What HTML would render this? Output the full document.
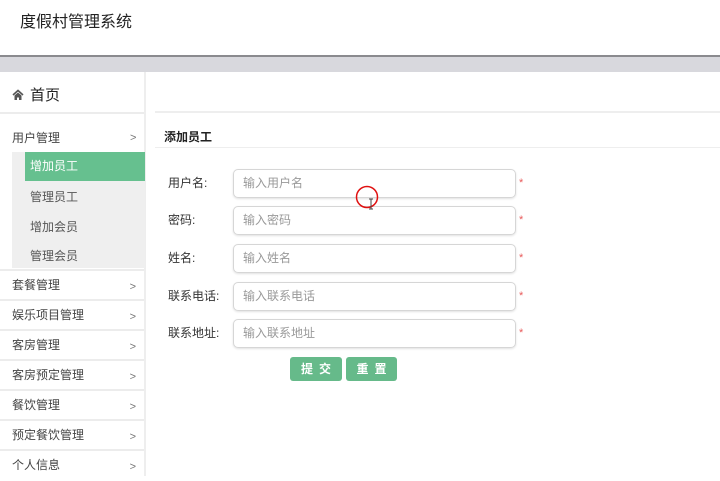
<!DOCTYPE html>
<html><head><meta charset="utf-8"><style>
*{margin:0;padding:0;box-sizing:border-box}
body{width:720px;height:476px;overflow:hidden;background:#fff;font-family:"Liberation Sans","Noto Sans CJK SC",sans-serif;position:relative;color:#333}
.a{position:absolute}
.hdr{left:0;top:0;width:720px;height:56px;background:#fff}
.title{left:20px;top:8px;font-size:16px;color:#222}
.line{left:0;top:55px;width:720px;height:2px;background:#8a8a8e}
.band{left:0;top:57px;width:720px;height:15px;background:#d8d8dd}
.sb{left:0;top:72px;width:146px;height:404px;border-right:2px solid #eee}
.home{left:12px;top:84px;font-size:15px;color:#222}
.mi{left:0;width:144px;height:30px;border-top:2px solid #ececec;font-size:12px;color:#444;padding-left:12px;line-height:28px}
.mi span{position:absolute;right:8px;top:2px;color:#777;font-size:11px}
.sub{left:12px;top:152px;width:133px;height:116px;background:#efefef}
.si{left:30px;font-size:12px;color:#555}
.act{left:25px;top:152px;width:120px;height:29px;background:#66c08f;color:#fff;font-size:12px;padding-left:5px;line-height:29px}
.lbl{left:168px;font-size:12px;color:#333}
.inp{left:233px;width:283px;height:29px;border:1px solid #d6d6d6;border-radius:5px;box-shadow:0 1px 2px rgba(0,0,0,.12);font-size:12px;color:#999;padding-left:9px;line-height:27px}
.star{left:519px;color:#e85a5a;font-size:11px}
.btn{top:357px;height:24px;background:#66ba8a;border-radius:3px;color:#fff;font-size:12px;text-align:center;line-height:24px;letter-spacing:6px;font-weight:bold}
</style></head><body>
<div class="a hdr"></div>
<div class="a title">度假村管理系统</div>
<div class="a line"></div>
<div class="a band"></div>
<div class="a sb"></div>
<div class="a home"><svg width="12" height="12" viewBox="0 0 12 12" style="vertical-align:-1px;margin-right:6px"><path d="M1 6L6 1.5 11 6" fill="none" stroke="#555" stroke-width="1.6"/><path d="M2.5 6.5L6 3.5 9.5 6.5V11H7V8.5H5V11H2.5z" fill="#555"/></svg>首页</div>
<div class="a" style="left:0;top:112px;width:144px;height:2px;background:#ececec"></div>
<div class="a" style="left:12px;top:129px;font-size:12px;color:#444">用户管理</div>
<div class="a" style="left:130px;top:132px;font-size:11px;color:#777">&gt;</div>
<div class="a sub"></div>
<div class="a act">增加员工</div>
<div class="a si" style="top:188px">管理员工</div>
<div class="a si" style="top:218px">增加会员</div>
<div class="a si" style="top:247px">管理会员</div>
<div class="a mi" style="top:269px">套餐管理<span>&gt;</span></div>
<div class="a mi" style="top:299px">娱乐项目管理<span>&gt;</span></div>
<div class="a mi" style="top:329px">客房管理<span>&gt;</span></div>
<div class="a mi" style="top:359px">客房预定管理<span>&gt;</span></div>
<div class="a mi" style="top:389px">餐饮管理<span>&gt;</span></div>
<div class="a mi" style="top:419px">预定餐饮管理<span>&gt;</span></div>
<div class="a mi" style="top:449px">个人信息<span>&gt;</span></div>
<div class="a" style="left:155px;top:111px;width:565px;height:2px;background:#eee"></div>
<div class="a" style="left:164px;top:128px;font-size:12px;font-weight:bold;color:#222">添加员工</div>
<div class="a" style="left:155px;top:147px;width:565px;height:1px;background:#eee"></div>
<div class="a lbl" style="top:174px">用户名:</div>
<div class="a inp" style="top:169px">输入用户名</div>
<div class="a star" style="top:177px">*</div>
<div class="a lbl" style="top:211px">密码:</div>
<div class="a inp" style="top:206px">输入密码</div>
<div class="a star" style="top:214px">*</div>
<div class="a lbl" style="top:249px">姓名:</div>
<div class="a inp" style="top:244px">输入姓名</div>
<div class="a star" style="top:252px">*</div>
<div class="a lbl" style="top:287px">联系电话:</div>
<div class="a inp" style="top:282px">输入联系电话</div>
<div class="a star" style="top:290px">*</div>
<div class="a lbl" style="top:324px">联系地址:</div>
<div class="a inp" style="top:319px">输入联系地址</div>
<div class="a star" style="top:327px">*</div>
<div class="a btn" style="left:290px;width:52px;padding-left:6px">提交</div>
<div class="a btn" style="left:346px;width:51px;padding-left:6px">重置</div>
<svg class="a" style="left:354px;top:185px" width="26" height="30" viewBox="0 0 26 30"><circle cx="13" cy="12" r="10.5" fill="none" stroke="#e01010" stroke-width="1.5"/><path d="M15 14h4M17 14v10M15 24h4" stroke="#444" stroke-width="1"/></svg>
</body></html>
